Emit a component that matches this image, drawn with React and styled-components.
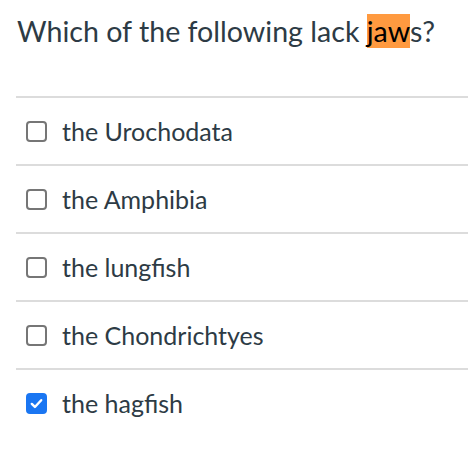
import styled, { createGlobalStyle } from 'styled-components';

const GlobalStyle = createGlobalStyle`
	body {
		margin: 0;
		background: #ffffff;
		font-family: Lato, "Open Sans", sans-serif;
		color: #2d3b45;
	}
`;

const Question = styled.div`
	width: 468px;
`;

const Title = styled.h2`
	margin: 0;
	padding: 14px 0 0 17px;
	height: 96px;
	box-sizing: border-box;
	font-size: 28.6px;
	font-weight: normal;
	line-height: 34px;
`;

const Mark = styled.span`
	background: #ff9a40;
	color: #000000;
`;

const Answers = styled.div`
	margin-left: 16px;
`;

const Answer = styled.label`
	display: flex;
	align-items: center;
	gap: 15px;
	height: 68px;
	box-sizing: border-box;
	padding-left: 10px;
	border-top: 2px solid #dcdcdc;
	font-size: 25px;
`;

const Box = styled.span`
	display: flex;
	align-items: center;
	justify-content: center;
	flex-shrink: 0;
	width: 21px;
	height: 21px;
	box-sizing: border-box;
	border-radius: 4px;
	border: ${(p) => (p.$checked ? 'none' : '2px solid #767676')};
	background: ${(p) => (p.$checked ? '#1a76f2' : '#ffffff')};
`;

const answers = [
	{ text: 'the Urochodata', checked: false },
	{ text: 'the Amphibia', checked: false },
	{ text: 'the lungfish', checked: false },
	{ text: 'the Chondrichtyes', checked: false },
	{ text: 'the hagfish', checked: true },
];

export default function App() {
	return (
		<Question>
			<GlobalStyle />
			<Title>
				Which of the following lack <Mark>jaw</Mark>s?
			</Title>
			<Answers>
				{answers.map((a) => (
					<Answer key={a.text}>
						<Box $checked={a.checked}>
							{a.checked && (
								<svg width="15" height="15" viewBox="0 0 16 16">
									<path
										d="M3 8.5l3.3 3.2L13 4.5"
										fill="none"
										stroke="#ffffff"
										strokeWidth="2.6"
										strokeLinecap="round"
										strokeLinejoin="round"
									/>
								</svg>
							)}
						</Box>
						{a.text}
					</Answer>
				))}
			</Answers>
		</Question>
	);
}
